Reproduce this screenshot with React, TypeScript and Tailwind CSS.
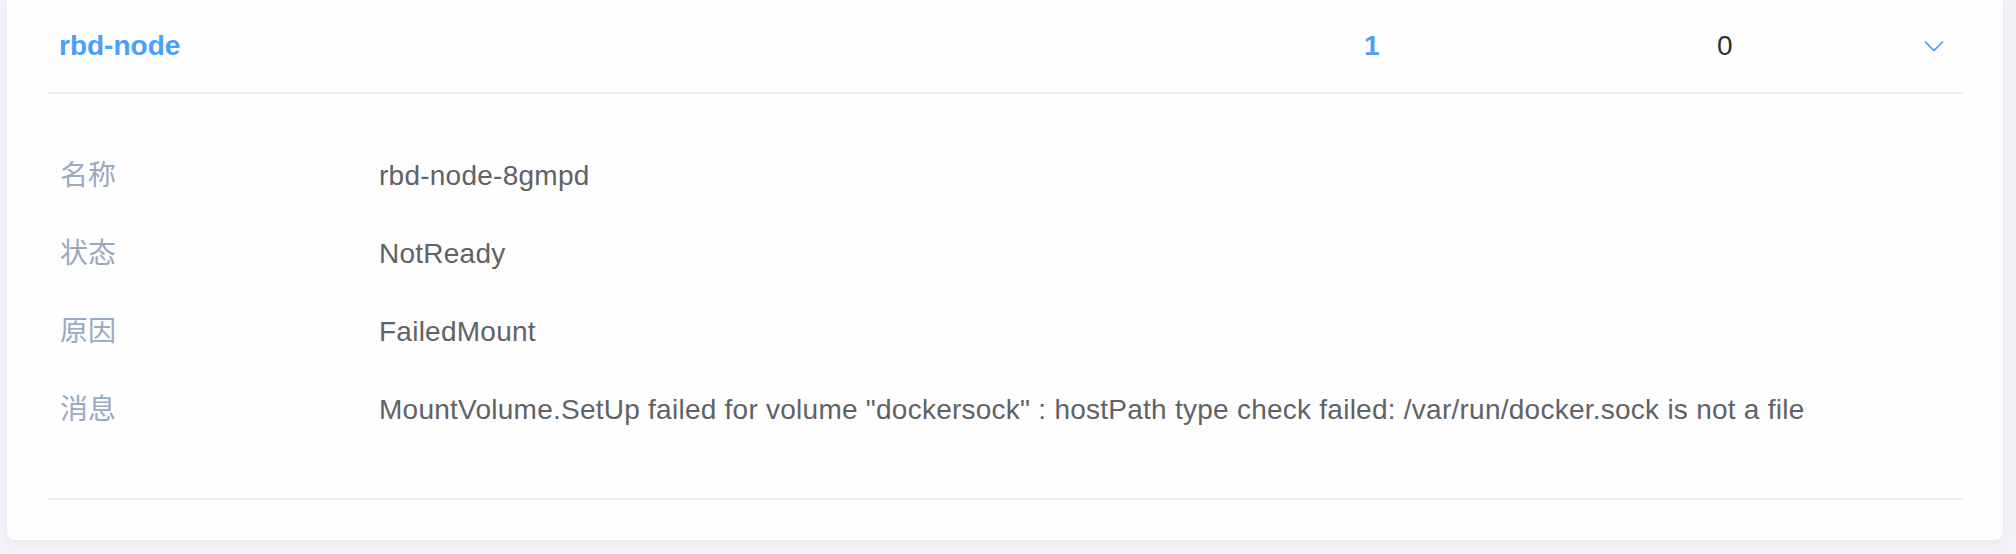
import React from 'react';

const rows = [
    { label: '名称', value: 'rbd-node-8gmpd' },
    { label: '状态', value: 'NotReady' },
    { label: '原因', value: 'FailedMount' },
    {
        label: '消息',
        value: 'MountVolume.SetUp failed for volume "dockersock" : hostPath type check failed: /var/run/docker.sock is not a file',
    },
];

const Chevron: React.FC = () => (
    <svg width="20" height="12" viewBox="0 0 20 12" fill="none">
        <polyline points="1,1.5 10,10.5 19,1.5" stroke="#409eff" strokeWidth="1.6" />
    </svg>
);

const App: React.FC = () => {
    return (
        <div
            className="w-[2016px] h-[554px] bg-[#f1f3f8] overflow-hidden"
            style={{ fontFamily: '"Liberation Sans", Arial, "Noto Sans CJK SC", sans-serif' }}
        >
            <div className="ml-[7px] w-[1996px] bg-[#fefefe] rounded-b-lg shadow-[0_2px_10px_0_rgba(0,0,0,0.05)] px-[40px] pb-[40px]">
                {/* header row */}
                <div className="flex items-center h-[94px] border-b-2 border-[#ebeef5] text-[28px]">
                    <div className="w-[1317px] pl-[12px] font-bold text-[#4a9ffa]">rbd-node</div>
                    <div className="w-[353px] font-bold text-[#4a9ffa]">1</div>
                    <div className="flex-1 text-[#303133]">0</div>
                    <div className="pr-[19px] flex items-center">
                        <Chevron />
                    </div>
                </div>

                {/* expanded detail */}
                <div className="pt-[43px] pb-[49px] border-b-2 border-[#ebeef5]">
                    {rows.map((r) => (
                        <div key={r.label} className="flex items-center h-[78px] text-[28px]">
                            <div className="w-[332px] pl-[13px] text-[#99a9bf]">{r.label}</div>
                            <div className="text-[#606266] whitespace-nowrap tracking-[0.25px]">{r.value}</div>
                        </div>
                    ))}
                </div>
            </div>
        </div>
    );
};

export default App;
